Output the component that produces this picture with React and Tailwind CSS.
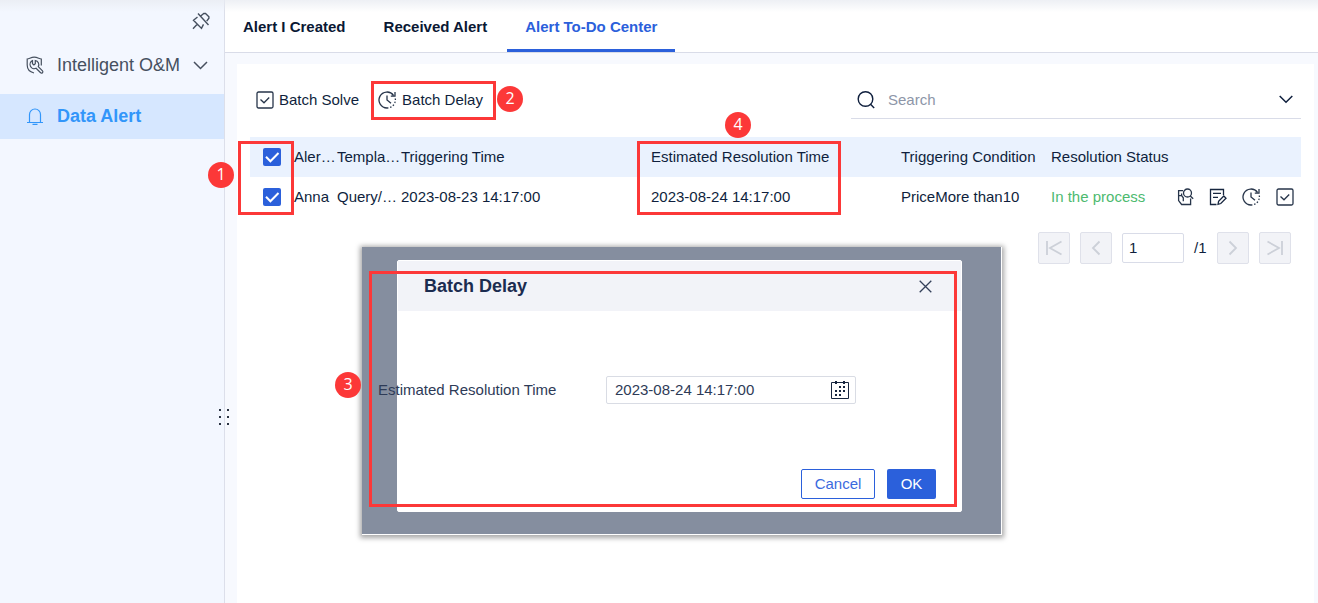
import React from "react";

const COLUMNS = [
  { label: "Aler…", width: "w-[43px]" },
  { label: "Templa…", width: "w-16" },
  { label: "Triggering Time", width: "w-[250px]" },
  { label: "Estimated Resolution Time", width: "w-[250px]" },
  { label: "Triggering Condition", width: "w-[150px]" },
  { label: "Resolution Status", width: "w-[120px]" },
];

const ALERTS = [
  {
    id: 1,
    cells: ["Anna", "Query/…", "2023-08-23 14:17:00", "2023-08-24 14:17:00", "PriceMore than10"],
    status: "In the process",
  },
];

const TABS = ["Alert I Created", "Received Alert", "Alert To-Do Center"];

export default function App() {
  return (
    <div className="relative flex min-h-screen bg-[#f7f9fe] font-['Liberation_Sans',Arial,sans-serif] text-[15px] leading-5 text-[#0f1f3d]">
      <Sidebar />
      <main className="flex min-w-0 flex-1 flex-col">
        <nav className="flex h-[53px] gap-0.5 border-b border-[#d9dce8] bg-white font-bold">
          {TABS.map((tab) => (
            <a
              key={tab}
              href="#"
              className={
                tab === "Alert To-Do Center"
                  ? "flex items-center border-b-3 border-[#2b60db] px-[18px] pt-1 text-[#2b60db]"
                  : "flex items-center px-[18px] pt-px text-[#0a1834]"
              }
            >
              {tab}
            </a>
          ))}
        </nav>

        <section className="mt-[11px] mr-1 ml-3 flex-1 bg-white pr-[13px] pl-[13px]">
          <Toolbar />
          <AlertTable />
          <Pagination />
        </section>
      </main>

      <BatchDelayDialog />

      {/* Top edge shade */}
      <div className="pointer-events-none absolute inset-x-0 top-0 h-3 bg-linear-to-b from-[#e9ecf2]/80 to-transparent" />

      {/* Numbered callouts */}
      <Callout box="left-[238px] top-[141px] w-14 h-[74px]" badge="left-[208px] top-[162px]" number={1} />
      <Callout box="left-[371px] top-[81px] w-[125px] h-[39px]" badge="left-[497px] top-[86px]" number={2} />
      <Callout box="left-[369px] top-[271px] w-[588px] h-[236px]" badge="left-[335px] top-[372px]" number={3} />
      <Callout box="left-[637px] top-[141px] w-[204px] h-[74px]" badge="left-[725px] top-[112px]" number={4} />
    </div>
  );
}

function Sidebar() {
  return (
    <aside className="relative w-[225px] shrink-0 border-r border-[#dcdfea] bg-[#f3f7ff] text-lg text-[#46505f]">
      <div className="flex h-9 items-end justify-end pr-3.5">
        <button type="button" aria-label="Unpin" className="mb-1.5">
          <UnpinIcon />
        </button>
      </div>
      <a href="#" className="flex h-[58px] items-center pr-4 pl-[26px]">
        <MaintenanceIcon />
        <span className="ml-[13px] flex-1">Intelligent O&amp;M</span>
        <svg width="15" height="9" viewBox="0 0 15 9" fill="none" stroke="currentColor" strokeWidth="1.5">
          <path d="M1 1l6.5 6.5L14 1" />
        </svg>
      </a>
      <a href="#" className="flex h-[45px] items-center bg-[#d6e7ff] pb-0.5 pl-[26px] font-bold text-[#3296fa]">
        <svg width="18" height="18" viewBox="0 0 18 18" fill="none" stroke="currentColor" strokeWidth="1.2">
          <path d="M3.5 15.5V7.5a5.5 5.5 0 0 1 11 0v8M1 15.5h16M6.5 17.4h5" />
        </svg>
        <span className="ml-[13px]">Data Alert</span>
      </a>
      {/* Drag handle on the divider */}
      <svg className="absolute -right-[6px] top-[408px]" width="12" height="18" viewBox="0 0 12 18" fill="#2b3444">
        <path d="M1 1h2v2H1zM1 8h2v2H1zM1 15h2v2H1zM9 1h2v2H9zM9 8h2v2H9zM9 15h2v2H9z" />
      </svg>
    </aside>
  );
}

function Toolbar() {
  return (
    <div className="mb-0.5 flex h-[71px] items-center">
      <button type="button" className="ml-1.5 flex items-center gap-[5px]">
        <CheckSquareIcon />
        Batch Solve
      </button>
      <button type="button" className="ml-[19px] flex items-center gap-[5px]">
        <DelayIcon />
        Batch Delay
      </button>
      <div className="ml-auto flex h-[38px] w-[450px] items-center border-b border-[#d9dce8] pt-px pr-2 pl-[6px]">
        <svg width="18" height="18" viewBox="0 0 18 18" fill="none" stroke="currentColor" strokeWidth="1.4">
          <circle cx="8.5" cy="8" r="7.3" />
          <path d="M13.5 13.2l3.7 3.8" />
        </svg>
        <input
          type="text"
          aria-label="Search"
          placeholder="Search"
          className="ml-[13px] min-w-0 flex-1 bg-transparent outline-none placeholder:text-[#8d96a8]"
        />
        <button type="button" aria-label="More filters">
          <svg width="14" height="9" viewBox="0 0 14 9" fill="none" stroke="currentColor" strokeWidth="1.5">
            <path d="M.7 1L7 7.3 13.3 1" />
          </svg>
        </button>
      </div>
    </div>
  );
}

function AlertTable() {
  return (
    <table className="w-full table-fixed text-left whitespace-nowrap">
      <thead>
        <tr className="h-10 bg-[#eaf2fe]">
          <th className="w-11 pl-[13px]">
            <Checkbox label="Select all" />
          </th>
          {COLUMNS.map((col) => (
            <th key={col.label} className={`font-normal ${col.width}`}>
              {col.label}
            </th>
          ))}
          <th />
        </tr>
      </thead>
      <tbody>
        {ALERTS.map((alert) => (
          <tr key={alert.id} className="h-10">
            <td className="pl-[13px]">
              <Checkbox label="Select alert" />
            </td>
            {alert.cells.map((cell, idx) => (
              <td key={idx}>{cell}</td>
            ))}
            <td className="text-[#4dba6f]">{alert.status}</td>
            <td>
              <div className="flex justify-end gap-[15px] pr-[7px]">
                <button type="button" aria-label="View"><ViewIcon /></button>
                <button type="button" aria-label="Edit"><EditIcon /></button>
                <button type="button" aria-label="Delay"><DelayIcon /></button>
                <button type="button" aria-label="Solve"><CheckSquareIcon /></button>
              </div>
            </td>
          </tr>
        ))}
      </tbody>
    </table>
  );
}

function Checkbox({ label }) {
  return (
    <span className="relative block size-[18px]">
      <input
        type="checkbox"
        aria-label={label}
        defaultChecked
        className="block size-[18px] appearance-none rounded-xs bg-[#2b60db]"
      />
      <svg className="pointer-events-none absolute inset-0" viewBox="0 0 18 18" fill="none" stroke="#fff" strokeWidth="2">
        <path d="M3 8.7l4.4 4.6L15.5 5" />
      </svg>
    </span>
  );
}

function Pagination() {
  return (
    <div className="mt-[15px] flex items-center justify-end gap-2.5 pr-2.5">
      <PageButton label="First page" path="M2 1v14M16.5 1.5L5 8l11.5 6.5" />
      <PageButton label="Previous page" path="M12.5 1.5L6 8l6.5 6.5" />
      <input
        type="text"
        aria-label="Page"
        defaultValue="1"
        className="h-[30px] w-[62px] rounded-xs border border-[#d9dce8] bg-white px-1.5 pb-0.5"
      />
      <span className="w-[13px]">/1</span>
      <PageButton label="Next page" path="M5.5 1.5L12 8l-6.5 6.5" />
      <PageButton label="Last page" path="M16 1v14M1.5 1.5L13 8 1.5 14.5" />
    </div>
  );
}

function PageButton({ label, path }) {
  return (
    <button
      type="button"
      disabled
      aria-label={label}
      className="flex size-8 items-center justify-center rounded-xs border border-[#dfe1ea] bg-[#f2f3f7] text-[#ccd0d8]"
    >
      <svg width="18" height="16" viewBox="0 0 18 16" fill="none" stroke="currentColor" strokeWidth="1.8">
        <path d={path} />
      </svg>
    </button>
  );
}

function BatchDelayDialog() {
  return (
    <div className="absolute left-[362px] top-[247px] w-[640px] border-r border-b border-white bg-[#858e9f] pt-[13px] pr-[39px] pb-[22px] pl-[35px] shadow-[0_1px_5px_2px_rgba(0,0,0,0.35)]">
      <div role="dialog" aria-label="Batch Delay" className="rounded-xs border border-white bg-white">
        <header className="flex h-[50px] items-center justify-between bg-[#f2f3f8] pr-[29px] pl-[26px]">
          <h2 className="text-lg leading-5 font-bold text-[#1b2c50]">Batch Delay</h2>
          <button type="button" aria-label="Close">
            <svg width="13" height="13" viewBox="0 0 13 13" fill="none" stroke="#34405a" strokeWidth="1.3">
              <path d="M.7.7l11.6 11.6M12.3.7L.7 12.3" />
            </svg>
          </button>
        </header>
        <div className="mt-[65px] -ml-5 flex items-center text-[#2e3b57]">
          <label htmlFor="resolution-time" className="w-[228px]">
            Estimated Resolution Time
          </label>
          <div className="flex h-7 w-[250px] items-center rounded-xs border border-[#d9dce4] bg-white pr-1.5 pl-2">
            <input
              id="resolution-time"
              type="text"
              defaultValue="2023-08-24 14:17:00"
              className="min-w-0 flex-1 outline-none"
            />
            <CalendarIcon />
          </div>
        </div>
        <footer className="mt-[65px] flex justify-end gap-3 pr-[25px] pb-3">
          <button type="button" className="h-[30px] w-[74px] rounded-xs border border-[#2b60db] text-[#3b6ade]">
            Cancel
          </button>
          <button type="button" className="h-[30px] w-[49px] rounded-xs bg-[#2b60db] text-white">
            OK
          </button>
        </footer>
      </div>
    </div>
  );
}

/** Red outline with its numbered badge. */
function Callout({ box, badge, number }) {
  return (
    <>
      <div className={`pointer-events-none absolute border-3 border-[#fc3838] ${box}`} />
      <span
        className={`absolute flex size-[26px] items-center justify-center rounded-full bg-[#fc3838] pb-0.5 font-['Open_Sans',sans-serif] text-base text-white ${badge}`}
      >
        {number}
      </span>
    </>
  );
}

function UnpinIcon() {
  return (
    <svg width="18" height="18" viewBox="0 0 18 18" fill="none" stroke="currentColor" strokeWidth="1.4">
      <path d="M6 1.5l10.5 11.5M5.5 5L1.5 8.2l8 8.2 2-4M5.2 12.2L1 16.8M9 3.8l2.8-2.3h1.7l3.4 3.3v1.4l-2.2 3" />
    </svg>
  );
}

function MaintenanceIcon() {
  return (
    <svg width="18" height="18" viewBox="0 0 18 18" fill="none" stroke="currentColor" strokeWidth="1.2">
      <path d="M8 17C4 16 1.2 13.2 1.2 9V3C3.5 2.7 5 1.2 8.2 1.2S13 2.7 15.3 3v6.5" />
      <path d="M6.5 4.6a4.2 4.2 0 1 0 3.6 7.7l4.5 4.4a1.3 1.3 0 0 0 1.9-1.8l-4.2-4.3a4.2 4.2 0 0 0-3-6.1v3.2L7.9 9 6.5 7.7z" />
    </svg>
  );
}

function CheckSquareIcon() {
  return (
    <svg width="18" height="18" viewBox="0 0 18 18" fill="none" stroke="#27354a" strokeWidth="1.3">
      <rect x="1" y="1" width="16" height="16" rx="1.5" />
      <path d="M4.5 8.5l3.5 3.3 5.2-5.3" />
    </svg>
  );
}

function DelayIcon() {
  return (
    <svg width="19" height="18" viewBox="0 0 19 18" fill="none" stroke="#27354a" strokeWidth="1.3">
      <path d="M9 17A8 8 0 1 1 15.5 4.3M17 1v4.2h-4.2M9 4.5V9l4 3.3" />
      <path d="M17.3 7.5A8.2 8.2 0 0 1 9 17" strokeDasharray="1.5 1.7" />
    </svg>
  );
}

function ViewIcon() {
  return (
    <svg width="18" height="18" viewBox="0 0 18 18" fill="none" stroke="#27354a" strokeWidth="1.3">
      <circle cx="11.5" cy="5" r="4" />
      <path d="M14.3 8l2.9 2.8M7 2.6H2.6v10l3 3.9h9v-6M2.6 7.6h3l1.7 2.2v3.4M5.6 5.6v2" />
    </svg>
  );
}

function EditIcon() {
  return (
    <svg width="18" height="18" viewBox="0 0 18 18" fill="none" stroke="#17263f" strokeWidth="1.3">
      <path d="M7.5 16.5H1.5v-15h13V7M4 5.3h8M4 9.3h5" />
      <path d="M9 16.3l.6-3L14.8 8l2.2 2.2-5.2 5.3z" />
    </svg>
  );
}

function CalendarIcon() {
  return (
    <svg width="18" height="18" viewBox="0 0 18 18" fill="none" stroke="#17263f">
      <path d="M.5 1.5h17v16H.5z" />
      <path d="M5 0v3M13 0v3" strokeWidth="2" />
      <path
        d="M8 6h2M12 6h2M4 10h2M8 10h2M12 10h2M4 14h2M8 14h2"
        strokeWidth="2"
      />
    </svg>
  );
}
